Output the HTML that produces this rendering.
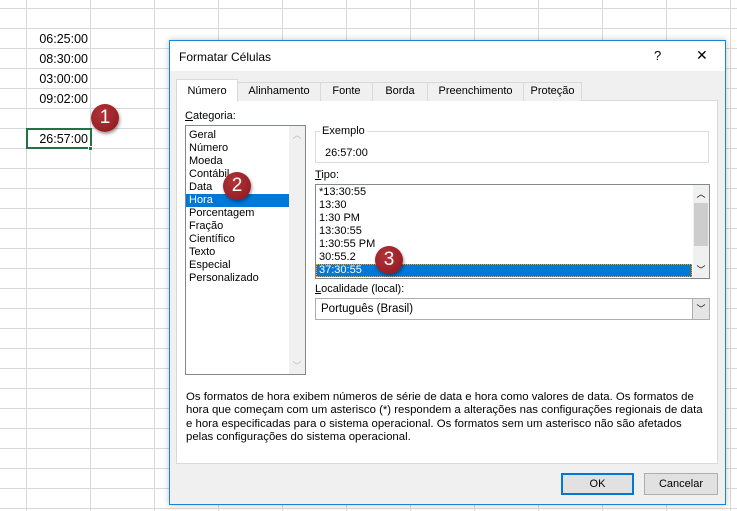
<!DOCTYPE html>
<html><head><meta charset="utf-8"><style>
*{margin:0;padding:0;box-sizing:border-box}
body{width:737px;height:511px;overflow:hidden;position:relative;background:#fff;font-family:"Liberation Sans",sans-serif;font-size:11px;color:#000}
.a{position:absolute}
.grid{position:absolute;left:0;top:0;width:737px;height:511px;
background-image:linear-gradient(to right,#d8d8d8 1px,transparent 1px),linear-gradient(to bottom,#d8d8d8 1px,transparent 1px);
background-size:64px 20px;background-position:26px 8px}
.cell{position:absolute;left:27px;width:63px;text-align:right;font-size:12.5px;padding-right:2px}
.badge{position:absolute;width:28px;height:28px;border-radius:50%;color:#fff;font-size:19px;text-align:center;line-height:28px;box-shadow:1px 2px 3px rgba(0,0,0,.4);background:radial-gradient(circle at 40% 35%,#b2343a,#8a171d)}
.tab{position:absolute;top:82px;height:19px;border:1px solid #d9d9d9;border-bottom:none;background:#f0f0f0;text-align:center;line-height:17px}
.li{position:absolute;left:0;height:13px;line-height:13px;padding-left:3px;width:100%}
</style></head><body>
<div class="grid"></div>
<div class="cell" style="top:32px">06:25:00</div>
<div class="cell" style="top:52px">08:30:00</div>
<div class="cell" style="top:72px">03:00:00</div>
<div class="cell" style="top:92px">09:02:00</div>
<div class="a" style="left:26px;top:128px;width:66px;height:21px;border:2px solid #217346;background:#fff"></div>
<div class="cell" style="top:132px">26:57:00</div>
<div class="a" style="left:88px;top:146px;width:5px;height:5px;background:#217346;border:1px solid #fff"></div>

<div class="a" style="left:169px;top:40px;width:557px;height:465px;border:1px solid #1883d7;background:#f0f0f0;box-shadow:0 0 6px rgba(0,0,0,.25)">
<div class="a" style="left:0;top:0;width:555px;height:30px;background:#fff"></div>
<div class="a" style="left:9px;top:9px;font-size:12px">Formatar Células</div>
<div class="a" style="left:484px;top:7px;font-size:13px">?</div>
<div class="a" style="left:526px;top:6px;font-size:14px">✕</div>
</div>
<div class="a" style="left:176px;top:100px;width:542px;height:364px;background:#fff;border:1px solid #d9d9d9"></div>
<div class="tab" style="left:237px;width:84px">Alinhamento</div>
<div class="tab" style="left:320px;width:53px">Fonte</div>
<div class="tab" style="left:372px;width:56px">Borda</div>
<div class="tab" style="left:427px;width:97px">Preenchimento</div>
<div class="tab" style="left:523px;width:59px">Proteção</div>
<div class="tab" style="left:176px;top:79px;width:62px;height:23px;background:#fff;line-height:22px">Número</div>

<div class="a" style="left:185px;top:110px"><u>C</u>ategoria:</div>
<div class="a" style="left:185px;top:125px;width:121px;height:250px;border:1px solid #828790;background:#fff">
<div class="a" style="left:103px;top:0;width:16px;height:248px;background:#f0f0f0;color:#bbb;font-size:9px;text-align:center">
<div style="margin-top:2px">︿</div><div style="position:absolute;bottom:2px;width:16px">﹀</div></div>
<div class="a" style="left:0;top:3px;width:103px">
<div class="li" style="top:0">Geral</div>
<div class="li" style="top:13px">Número</div>
<div class="li" style="top:26px">Moeda</div>
<div class="li" style="top:39px">Contábil</div>
<div class="li" style="top:52px">Data</div>
<div class="li" style="top:65px;background:#0078d7;color:#fff">Hora</div>
<div class="li" style="top:78px">Porcentagem</div>
<div class="li" style="top:91px">Fração</div>
<div class="li" style="top:104px">Científico</div>
<div class="li" style="top:117px">Texto</div>
<div class="li" style="top:130px">Especial</div>
<div class="li" style="top:143px">Personalizado</div>
</div></div>

<div class="a" style="left:315px;top:131px;width:394px;height:32px;border:1px solid #dcdcdc"></div>
<div class="a" style="left:320px;top:125px;background:#fff;padding:0 2px">Exemplo</div>
<div class="a" style="left:325px;top:147px">26:57:00</div>

<div class="a" style="left:315px;top:169px"><u>T</u>ipo:</div>
<div class="a" style="left:315px;top:184px;width:395px;height:95px;border:1px solid #828790;background:#fff">
<div class="a" style="left:377px;top:0;width:16px;height:93px;background:#f0f0f0;font-size:9px;text-align:center">
<div style="margin-top:2px">︿</div>
<div class="a" style="left:1px;top:18px;width:14px;height:43px;background:#cdcdcd"></div>
<div style="position:absolute;bottom:2px;width:16px">﹀</div></div>
<div class="a" style="left:0;top:1px;width:376px">
<div class="li" style="top:0">*13:30:55</div>
<div class="li" style="top:13px">13:30</div>
<div class="li" style="top:26px">1:30 PM</div>
<div class="li" style="top:39px">13:30:55</div>
<div class="li" style="top:52px">1:30:55 PM</div>
<div class="li" style="top:65px">30:55.2</div>
<div class="li" style="top:78px;background:#0078d7;color:#fff;outline:1px dotted #f0a030;outline-offset:-1px">37:30:55</div>
</div></div>

<div class="a" style="left:315px;top:283px"><u>L</u>ocalidade (local):</div>
<div class="a" style="left:315px;top:298px;width:395px;height:22px;border:1px solid #adadad;background:#fff">
<div class="a" style="left:5px;top:4px;font-size:11.5px">Português (Brasil)</div>
<div class="a" style="left:376px;top:0;width:17px;height:20px;background:#e5e5e5;border-left:1px solid #adadad;text-align:center;font-size:9px;line-height:20px">﹀</div>
</div>

<div class="a" style="left:186px;top:391px;width:525px;line-height:13.3px;font-size:11.4px">Os formatos de hora exibem números de série de data e hora como valores de data. Os formatos de hora que começam com um asterisco (*) respondem a alterações nas configurações regionais de data e hora especificadas para o sistema operacional. Os formatos sem um asterisco não são afetados pelas configurações do sistema operacional.</div>

<div class="a" style="left:561px;top:473px;width:73px;height:22px;border:2px solid #0078d7;background:#e1e1e1;text-align:center;line-height:18px">OK</div>
<div class="a" style="left:644px;top:473px;width:74px;height:22px;border:1px solid #adadad;background:#e1e1e1;text-align:center;line-height:20px">Cancelar</div>

<div class="badge" style="left:91px;top:104px">1</div>
<div class="badge" style="left:223px;top:172px">2</div>
<div class="badge" style="left:375px;top:246px">3</div>
</body></html>
